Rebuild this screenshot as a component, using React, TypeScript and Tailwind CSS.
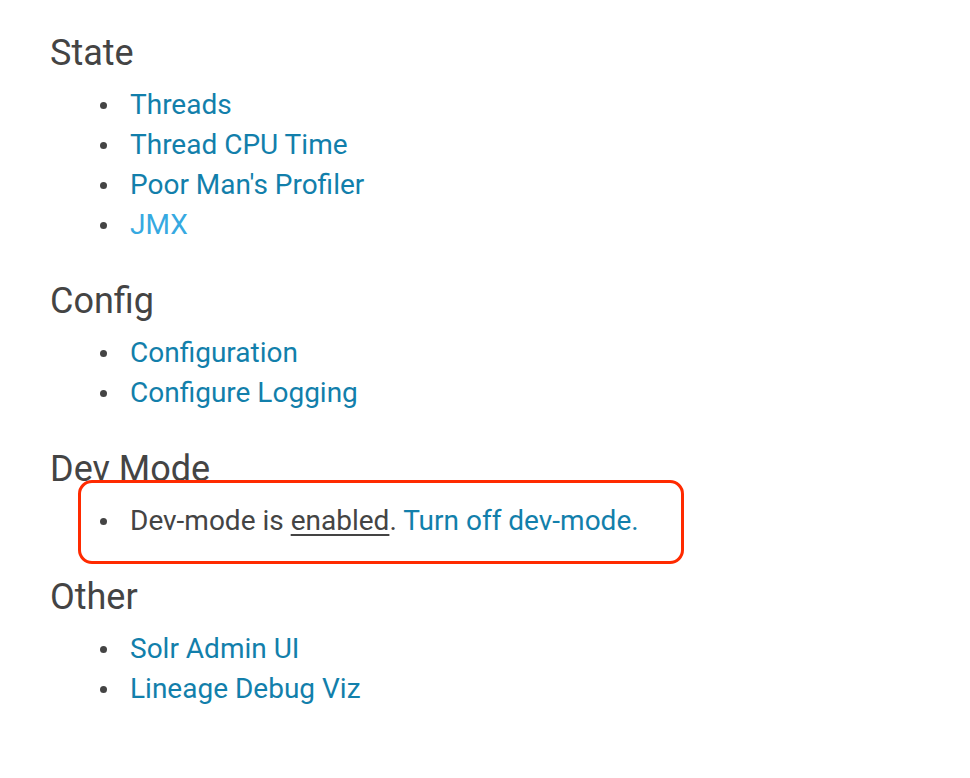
function Bullet({ children }: { children: React.ReactNode }) {
  return (
    <li className="flex items-center">
      <span className="w-[7px] h-[7px] rounded-full bg-[#444] mr-[23px] shrink-0" />
      <span>{children}</span>
    </li>
  );
}

export default function App() {
  const sections = [
    { title: "State", items: ["Threads", "Thread CPU Time", "Poor Man's Profiler", "JMX"] },
    { title: "Config", items: ["Configuration", "Configure Logging"] },
  ];
  const other = ["Solr Admin UI", "Lineage Debug Viz"];

  return (
    <div className="min-h-screen bg-white pl-[50px] pt-[31px] text-[#444] font-['Roboto',sans-serif]">
      {sections.map((s) => (
        <section key={s.title} className="mb-[34px]">
          <h2 className="text-[36px] leading-[44px] mb-[10px]">{s.title}</h2>
          <ul className="pl-[50px] text-[28px] leading-[40px]">
            {s.items.map((item) => (
              <Bullet key={item}>
                <a className={item === "JMX" ? "text-[#36a9e1]" : "text-[#127fab]"} href="#">
                  {item}
                </a>
              </Bullet>
            ))}
          </ul>
        </section>
      ))}

      <section className="mb-[34px]">
        <h2 className="text-[36px] leading-[44px] mb-[10px]">Dev Mode</h2>
        <div className="relative">
          <ul className="pl-[50px] text-[28px] leading-[40px]">
            <Bullet>
              Dev-mode is <span className="underline underline-offset-4">enabled</span>.{" "}
              <a className="text-[#127fab]" href="#">
                Turn off dev-mode.
              </a>
            </Bullet>
          </ul>
          <div className="pointer-events-none absolute left-[28px] top-[-21px] w-[606px] h-[84px] rounded-[14px] border-[3px] border-[#ff2a00]" />
        </div>
      </section>

      <section>
        <h2 className="text-[36px] leading-[44px] mb-[10px]">Other</h2>
        <ul className="pl-[50px] text-[28px] leading-[40px]">
          {other.map((item) => (
            <Bullet key={item}>
              <a className="text-[#127fab]" href="#">
                {item}
              </a>
            </Bullet>
          ))}
        </ul>
      </section>
    </div>
  );
}
